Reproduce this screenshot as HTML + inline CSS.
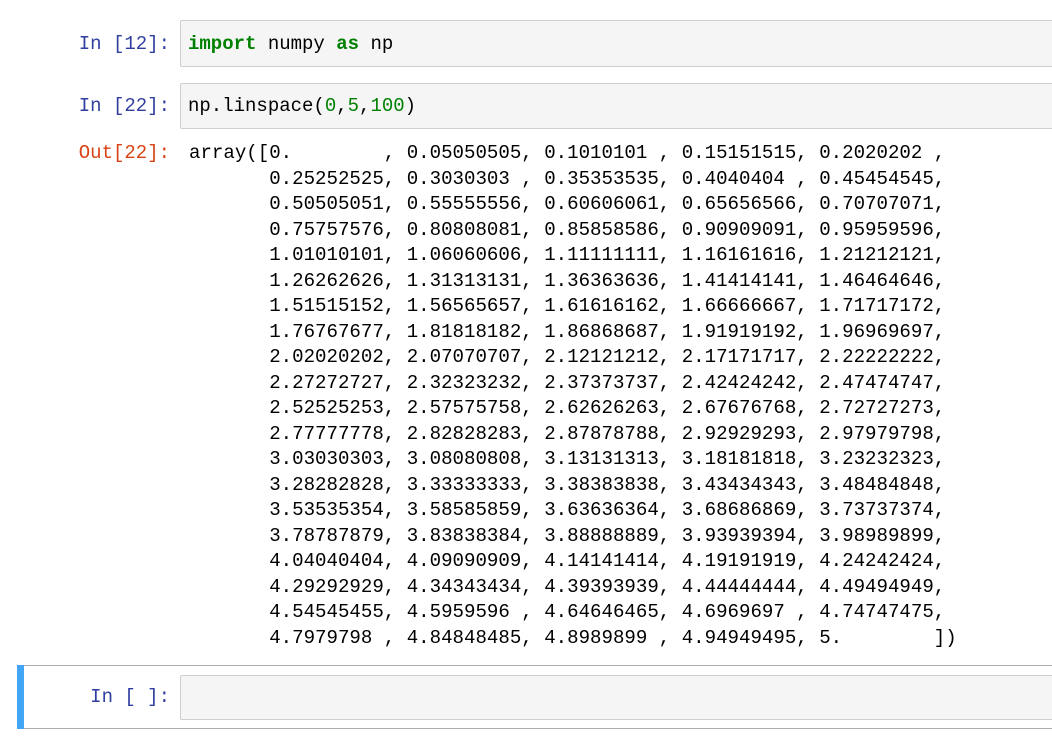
<!DOCTYPE html>
<html><head><meta charset="utf-8"><style>
body{margin:0;width:1052px;height:740px;background:#fff;position:relative;overflow:hidden;font-family:"Liberation Mono","DejaVu Sans Mono",monospace;}
.p{position:absolute;right:882px;font-size:19px;color:#303f9f;white-space:pre;line-height:24px;}
.o{color:#d84315;}
.box{position:absolute;left:180px;right:-2px;background:#f5f5f5;border:1px solid #cfcfcf;border-radius:2px;}
.code{position:absolute;left:188px;font-size:19px;white-space:pre;line-height:24px;color:#000;}
.k{color:#008000;font-weight:bold;}
.n{color:#008000;}
pre{margin:0;position:absolute;left:189px;top:141px;font-family:inherit;font-size:19.1px;line-height:25.5px;color:#000;}
</style></head><body>
<div class="box" style="top:20px;height:45px"></div>
<div class="p" style="top:32px">In [12]:</div>
<div class="code" style="top:32px"><span class="k">import</span> numpy <span class="k">as</span> np</div>

<div class="box" style="top:83px;height:44px"></div>
<div class="p" style="top:94px">In [22]:</div>
<div class="code" style="top:94px">np.linspace(<span class="n">0</span>,<span class="n">5</span>,<span class="n">100</span>)</div>

<div class="p o" style="top:141px">Out[22]:</div>
<pre>array([0.        , 0.05050505, 0.1010101 , 0.15151515, 0.2020202 ,
       0.25252525, 0.3030303 , 0.35353535, 0.4040404 , 0.45454545,
       0.50505051, 0.55555556, 0.60606061, 0.65656566, 0.70707071,
       0.75757576, 0.80808081, 0.85858586, 0.90909091, 0.95959596,
       1.01010101, 1.06060606, 1.11111111, 1.16161616, 1.21212121,
       1.26262626, 1.31313131, 1.36363636, 1.41414141, 1.46464646,
       1.51515152, 1.56565657, 1.61616162, 1.66666667, 1.71717172,
       1.76767677, 1.81818182, 1.86868687, 1.91919192, 1.96969697,
       2.02020202, 2.07070707, 2.12121212, 2.17171717, 2.22222222,
       2.27272727, 2.32323232, 2.37373737, 2.42424242, 2.47474747,
       2.52525253, 2.57575758, 2.62626263, 2.67676768, 2.72727273,
       2.77777778, 2.82828283, 2.87878788, 2.92929293, 2.97979798,
       3.03030303, 3.08080808, 3.13131313, 3.18181818, 3.23232323,
       3.28282828, 3.33333333, 3.38383838, 3.43434343, 3.48484848,
       3.53535354, 3.58585859, 3.63636364, 3.68686869, 3.73737374,
       3.78787879, 3.83838384, 3.88888889, 3.93939394, 3.98989899,
       4.04040404, 4.09090909, 4.14141414, 4.19191919, 4.24242424,
       4.29292929, 4.34343434, 4.39393939, 4.44444444, 4.49494949,
       4.54545455, 4.5959596 , 4.64646465, 4.6969697 , 4.74747475,
       4.7979798 , 4.84848485, 4.8989899 , 4.94949495, 5.        ])</pre>

<div style="position:absolute;left:17px;top:665px;width:1040px;height:62px;border-top:1px solid #ababab;border-bottom:1px solid #ababab;"></div>
<div style="position:absolute;left:17px;top:665px;width:7px;height:64px;background:#42a5f5;"></div>
<div class="box" style="top:675px;height:43px"></div>
<div class="p" style="top:685px">In [ ]:</div>
</body></html>
